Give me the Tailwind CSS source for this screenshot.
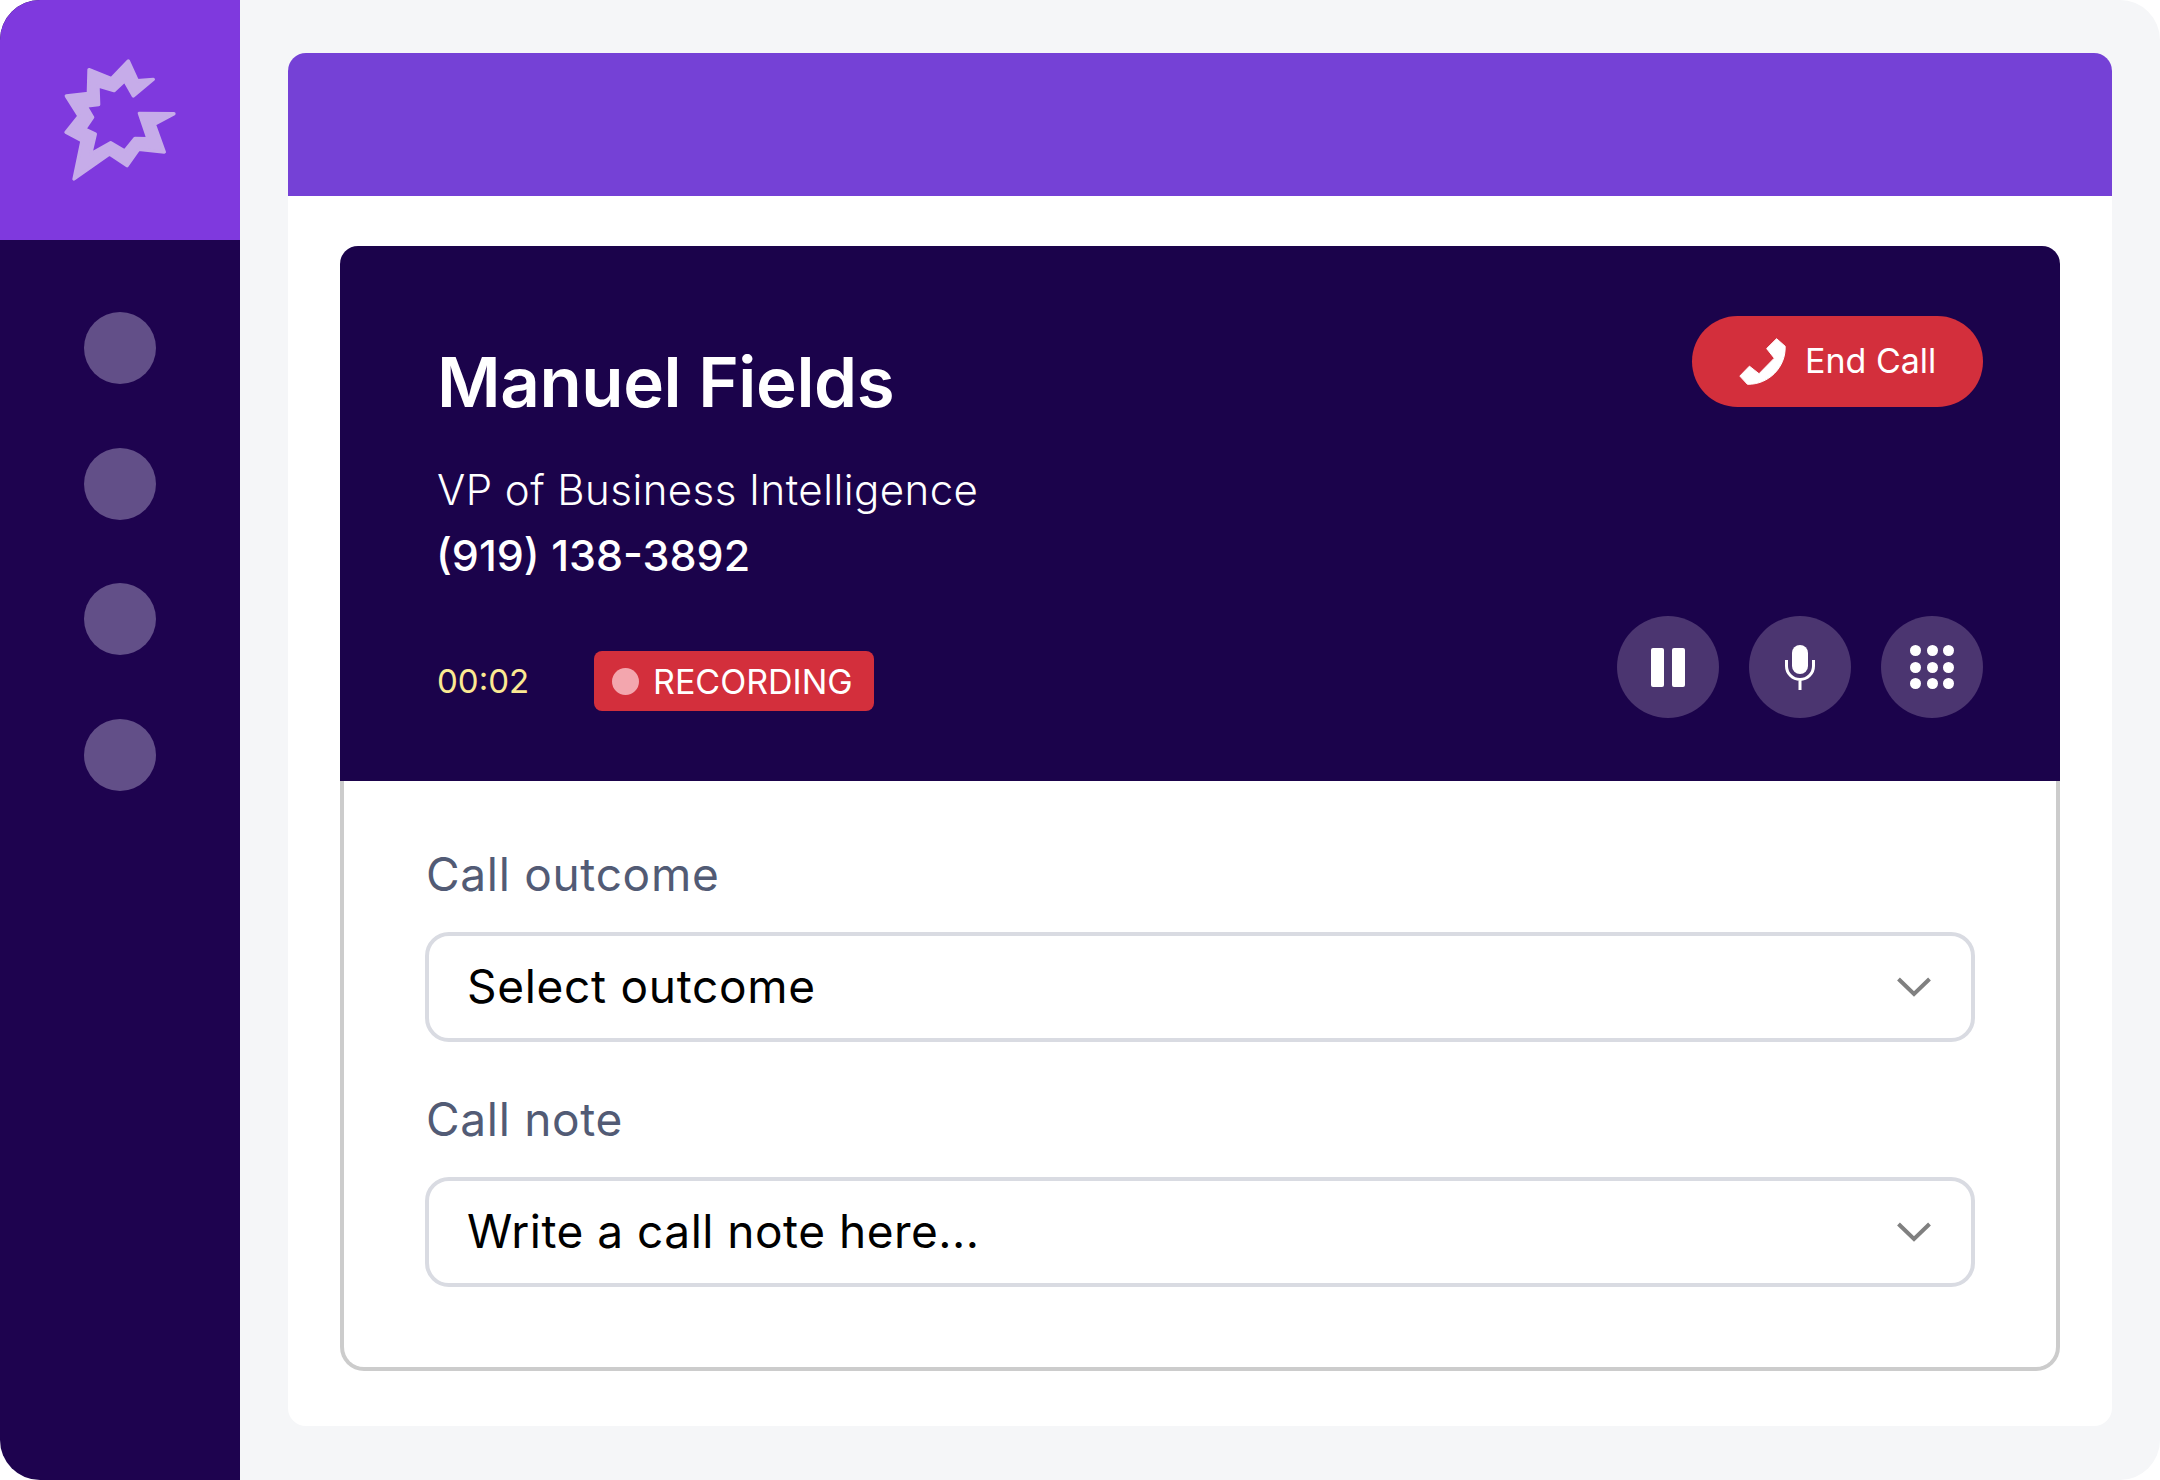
<!DOCTYPE html>
<html lang="en">
<head>
    <meta charset="UTF-8">
    <meta name="viewport" content="width=device-width, initial-scale=1.0">
    <title>Call</title>
    <script src="https://cdn.jsdelivr.net/npm/@tailwindcss/browser@4"></script>
</head>
<body class="bg-white font-['Inter',sans-serif]">
    <div class="flex w-[2160px] h-[1480px] rounded-[40px] overflow-hidden bg-[#f5f6f8]">
        <!-- Sidebar -->
        <aside class="w-[240px] shrink-0 bg-[#1e034f] flex flex-col items-center">
            <div class="w-[240px] h-[240px] bg-[#7f39de]">
                <svg class="w-[240px] h-[240px]" viewBox="0 0 720 720">
                    <path fill="#c6ace9" stroke="#c6ace9" stroke-width="10" stroke-linejoin="round" d="M385 183 L412 242 L460 238 L400 288 L374 242 L342 272 L294 258 L296 314 L258 318 L278 352 L254 387 L286 402 L272 462 L332 428 L374 453 L405 415 L444 416 L418 340 L522 341 L463 373 L493 456 L416 448 L381 497 L329 462 L222 537 L246 422 L198 397 L237 348 L199 288 L265 280 L267 209 L334 236 Z"/>
                </svg>
            </div>
            <div class="mt-[72px] flex flex-col gap-[63.5px]">
                <div class="w-[72px] h-[72px] rounded-full bg-[#624f88]"></div>
                <div class="w-[72px] h-[72px] rounded-full bg-[#624f88]"></div>
                <div class="w-[72px] h-[72px] rounded-full bg-[#624f88]"></div>
                <div class="w-[72px] h-[72px] rounded-full bg-[#624f88]"></div>
            </div>
        </aside>

        <!-- Main -->
        <main class="flex-1 pt-[53px] px-[48px] pb-[54px]">
            <div class="h-full bg-white rounded-[18px] overflow-hidden flex flex-col">
                <div class="h-[143px] shrink-0 bg-[#7541d6]"></div>
                <div class="px-[52px] pt-[50px]">
                    <!-- Call panel -->
                    <section class="h-[535px] bg-[#1b034b] rounded-t-[18px] relative pl-[97px] pr-[77px] flex justify-between">
                        <div class="text-white">
                            <h1 class="mt-[100px] text-[69px] leading-[72px] font-semibold tracking-[-0.4px]">Manuel Fields</h1>
                            <p class="mt-[47px] text-[42px] leading-[50px] font-light tracking-[0.45px]">VP of Business Intelligence</p>
                            <p class="mt-[14px] text-[43px] leading-[52px] font-medium -ml-[1px]">(919) 138-3892</p>
                            <div class="mt-[70px] flex items-center">
                                <span class="w-[157px] text-[33px] leading-[44px] text-[#fbe992]">00:02</span>
                                <span class="flex items-center w-[280px] h-[60px] pl-[18px] rounded-[8px] bg-[#d32f3c] text-[34px]">
                                    <span class="w-[27px] h-[27px] rounded-full bg-[#f3a6ae] mr-[14px]"></span>RECORDING
                                </span>
                            </div>
                        </div>
                        <div class="flex flex-col items-end justify-between pt-[70px] pb-[63px]">
                            <button class="w-[291px] h-[91px] rounded-full bg-[#d32f3c] text-white text-[34px] flex items-center pl-[47px]">
                                <svg class="w-[47px] h-[47px] mr-[19px]" viewBox="237 143 141 142">
                                    <path fill="#fff" stroke="#fff" stroke-width="3" stroke-linejoin="round" d="M350 145 L376 168 C378 232 326 284 262 283 L239 258 L268 228 L297 251 L343 204 L320 175 Z"/>
                                </svg>
                                <span class="mb-[2px]">End Call</span>
                            </button>
                            <div class="flex gap-[30px]">
                                <button class="w-[102px] h-[102px] rounded-full bg-[#4b3570] flex items-center justify-center gap-[8px]">
                                    <span class="w-[13px] h-[39px] rounded-[2px] bg-white"></span>
                                    <span class="w-[13px] h-[39px] rounded-[2px] bg-white"></span>
                                </button>
                                <button class="w-[102px] h-[102px] rounded-full bg-[#4b3570] flex items-center justify-center">
                                    <svg class="w-[30px] h-[45px]" viewBox="0 0 30 45">
                                        <rect x="7" y="0" width="16" height="29" rx="8" fill="#fff"/>
                                        <path fill="none" stroke="#fff" stroke-width="3" d="M1.5 15 V21 A13.5 13.5 0 0 0 28.5 21 V15 M15 34 V45"/>
                                    </svg>
                                </button>
                                <button class="w-[102px] h-[102px] rounded-full bg-[#4b3570] flex items-center justify-center">
                                    <span class="grid grid-cols-3 gap-[5.3px]">
                                        <span class="w-[11px] h-[11px] rounded-full bg-white"></span>
                                        <span class="w-[11px] h-[11px] rounded-full bg-white"></span>
                                        <span class="w-[11px] h-[11px] rounded-full bg-white"></span>
                                        <span class="w-[11px] h-[11px] rounded-full bg-white"></span>
                                        <span class="w-[11px] h-[11px] rounded-full bg-white"></span>
                                        <span class="w-[11px] h-[11px] rounded-full bg-white"></span>
                                        <span class="w-[11px] h-[11px] rounded-full bg-white"></span>
                                        <span class="w-[11px] h-[11px] rounded-full bg-white"></span>
                                        <span class="w-[11px] h-[11px] rounded-full bg-white"></span>
                                    </span>
                                </button>
                            </div>
                        </div>
                    </section>

                    <!-- Form -->
                    <section class="h-[590px] border-[4px] border-t-0 border-[#cccccc] rounded-b-[24px] px-[81px] pt-[65px]">
                        <label class="block text-[46px] leading-[56px] text-[#525b75] tracking-[0.7px] pl-[1px]">Call outcome</label>
                        <div class="mt-[30px] h-[110px] border-[4px] border-[#d9dbe2] rounded-[24px] flex items-center justify-between pl-[38px] pr-[40px] text-[46px] text-black">
                            <span class="mb-[2px] tracking-[0.7px]">Select outcome</span>
                            <svg class="w-[34px] h-[20px]" viewBox="0 0 34 20"><path fill="none" stroke="#808080" stroke-width="4" d="M1.5 2 L17 17 L32.5 2"/></svg>
                        </div>
                        <label class="mt-[49px] block text-[46px] leading-[56px] text-[#525b75] tracking-[0.7px] pl-[1px]">Call note</label>
                        <div class="mt-[30px] h-[110px] border-[4px] border-[#d9dbe2] rounded-[24px] flex items-center justify-between pl-[38px] pr-[40px] text-[46px] text-black">
                            <span class="mb-[2px] tracking-[0.5px]">Write a call note here...</span>
                            <svg class="w-[34px] h-[20px]" viewBox="0 0 34 20"><path fill="none" stroke="#808080" stroke-width="4" d="M1.5 2 L17 17 L32.5 2"/></svg>
                        </div>
                    </section>
                </div>
            </div>
        </main>
    </div>
</body>
</html>
